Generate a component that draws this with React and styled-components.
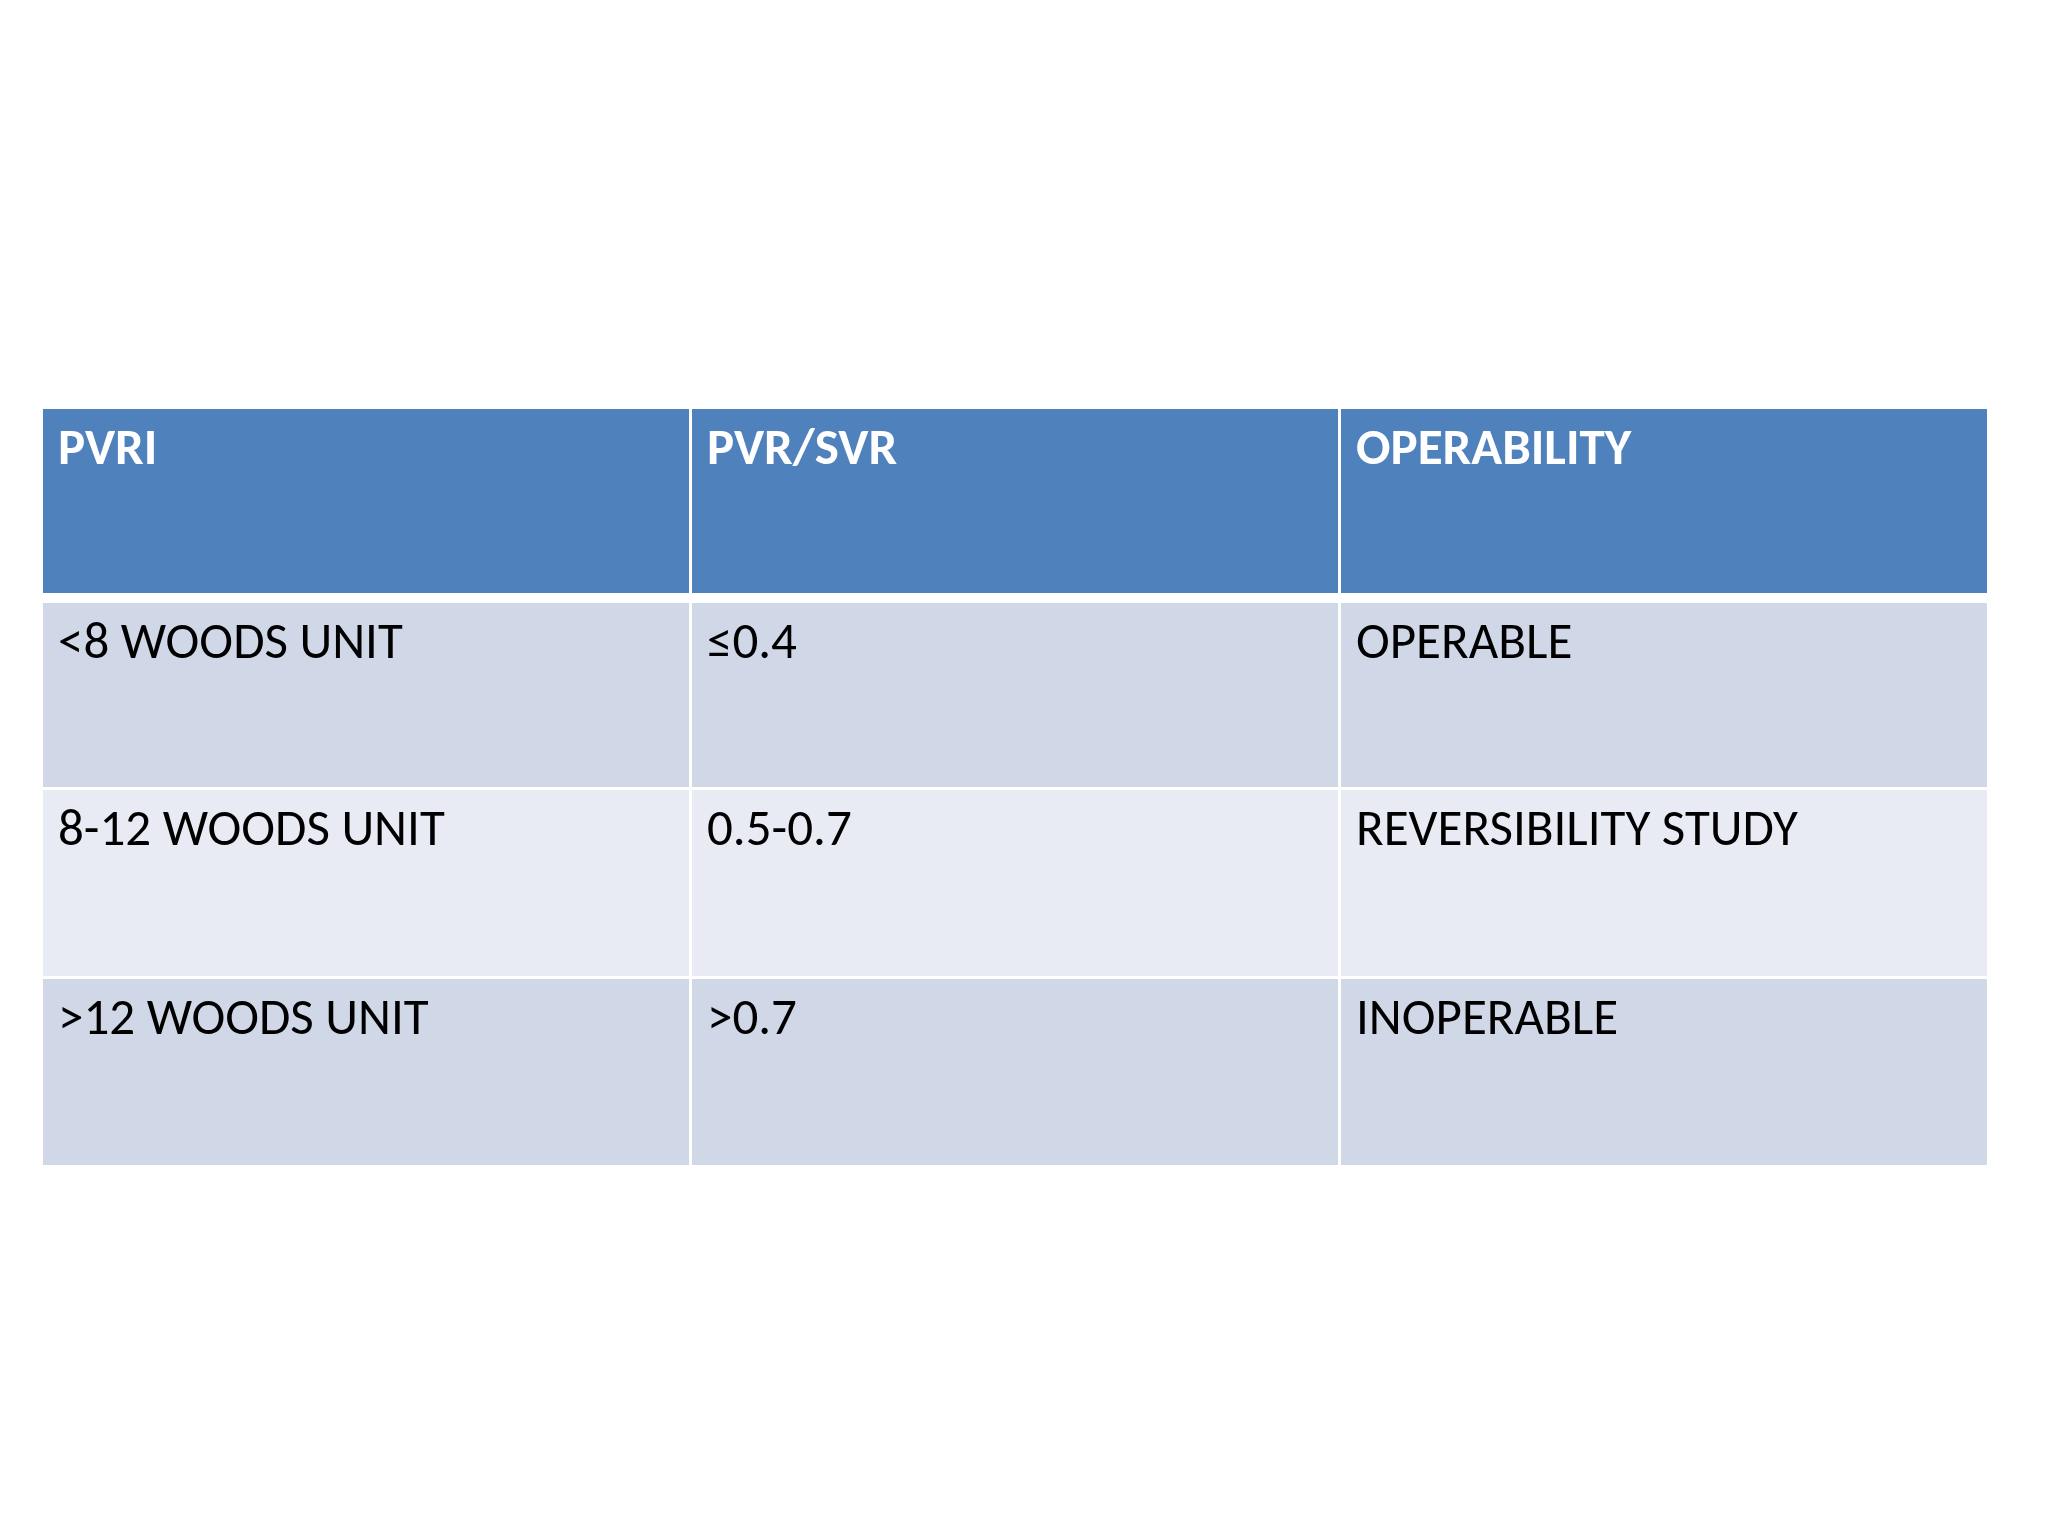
import React from "react";
import styled, { createGlobalStyle } from "styled-components";

const GlobalStyle = createGlobalStyle`
  html, body {
    margin: 0;
    padding: 0;
    background: #ffffff;
  }
  body {
    font-family: Carlito, "Open Sans", "Liberation Sans", sans-serif;
  }
`;

const Page = styled.div`
  width: 2048px;
  height: 1536px;
  box-sizing: border-box;
  padding: 409px 0 0 43px;
  background: #ffffff;
`;

const Table = styled.div`
  width: 1944px;
  display: flex;
  flex-direction: column;
  gap: 3px;
`;

const Row = styled.div`
  display: grid;
  grid-template-columns: repeat(3, 646px);
  column-gap: 3px;
  height: ${(p) => p.height}px;
  margin-bottom: ${(p) => (p.header ? 7 : 0)}px;
`;

const Cell = styled.div`
  box-sizing: border-box;
  padding: 7px 15px 0 15px;
  font-size: 51px;
  line-height: 1.22;
  background: ${(p) => p.bg};
  color: ${(p) => (p.header ? "#ffffff" : "#000000")};
  font-weight: ${(p) => (p.header ? 700 : 400)};
  white-space: nowrap;
`;

const rows = [
  ["<8 WOODS UNIT", "≤0.4", "OPERABLE"],
  ["8-12 WOODS UNIT", "0.5-0.7", "REVERSIBILITY STUDY"],
  [">12 WOODS UNIT", ">0.7", "INOPERABLE"],
];

const bands = ["#D0D8E8", "#E9EBF4", "#D0D8E8"];

export default function App() {
  return (
    <Page>
      <GlobalStyle />
      <Table>
        <Row header height={184}>
          {["PVRI", "PVR/SVR", "OPERABILITY"].map((t) => (
            <Cell key={t} header bg="#4F81BD">
              {t}
            </Cell>
          ))}
        </Row>
        {rows.map((r, i) => (
          <Row key={i} height={i === 0 ? 184 : 186}>
            {r.map((t) => (
              <Cell key={t} bg={bands[i]}>
                {t}
              </Cell>
            ))}
          </Row>
        ))}
      </Table>
    </Page>
  );
}
